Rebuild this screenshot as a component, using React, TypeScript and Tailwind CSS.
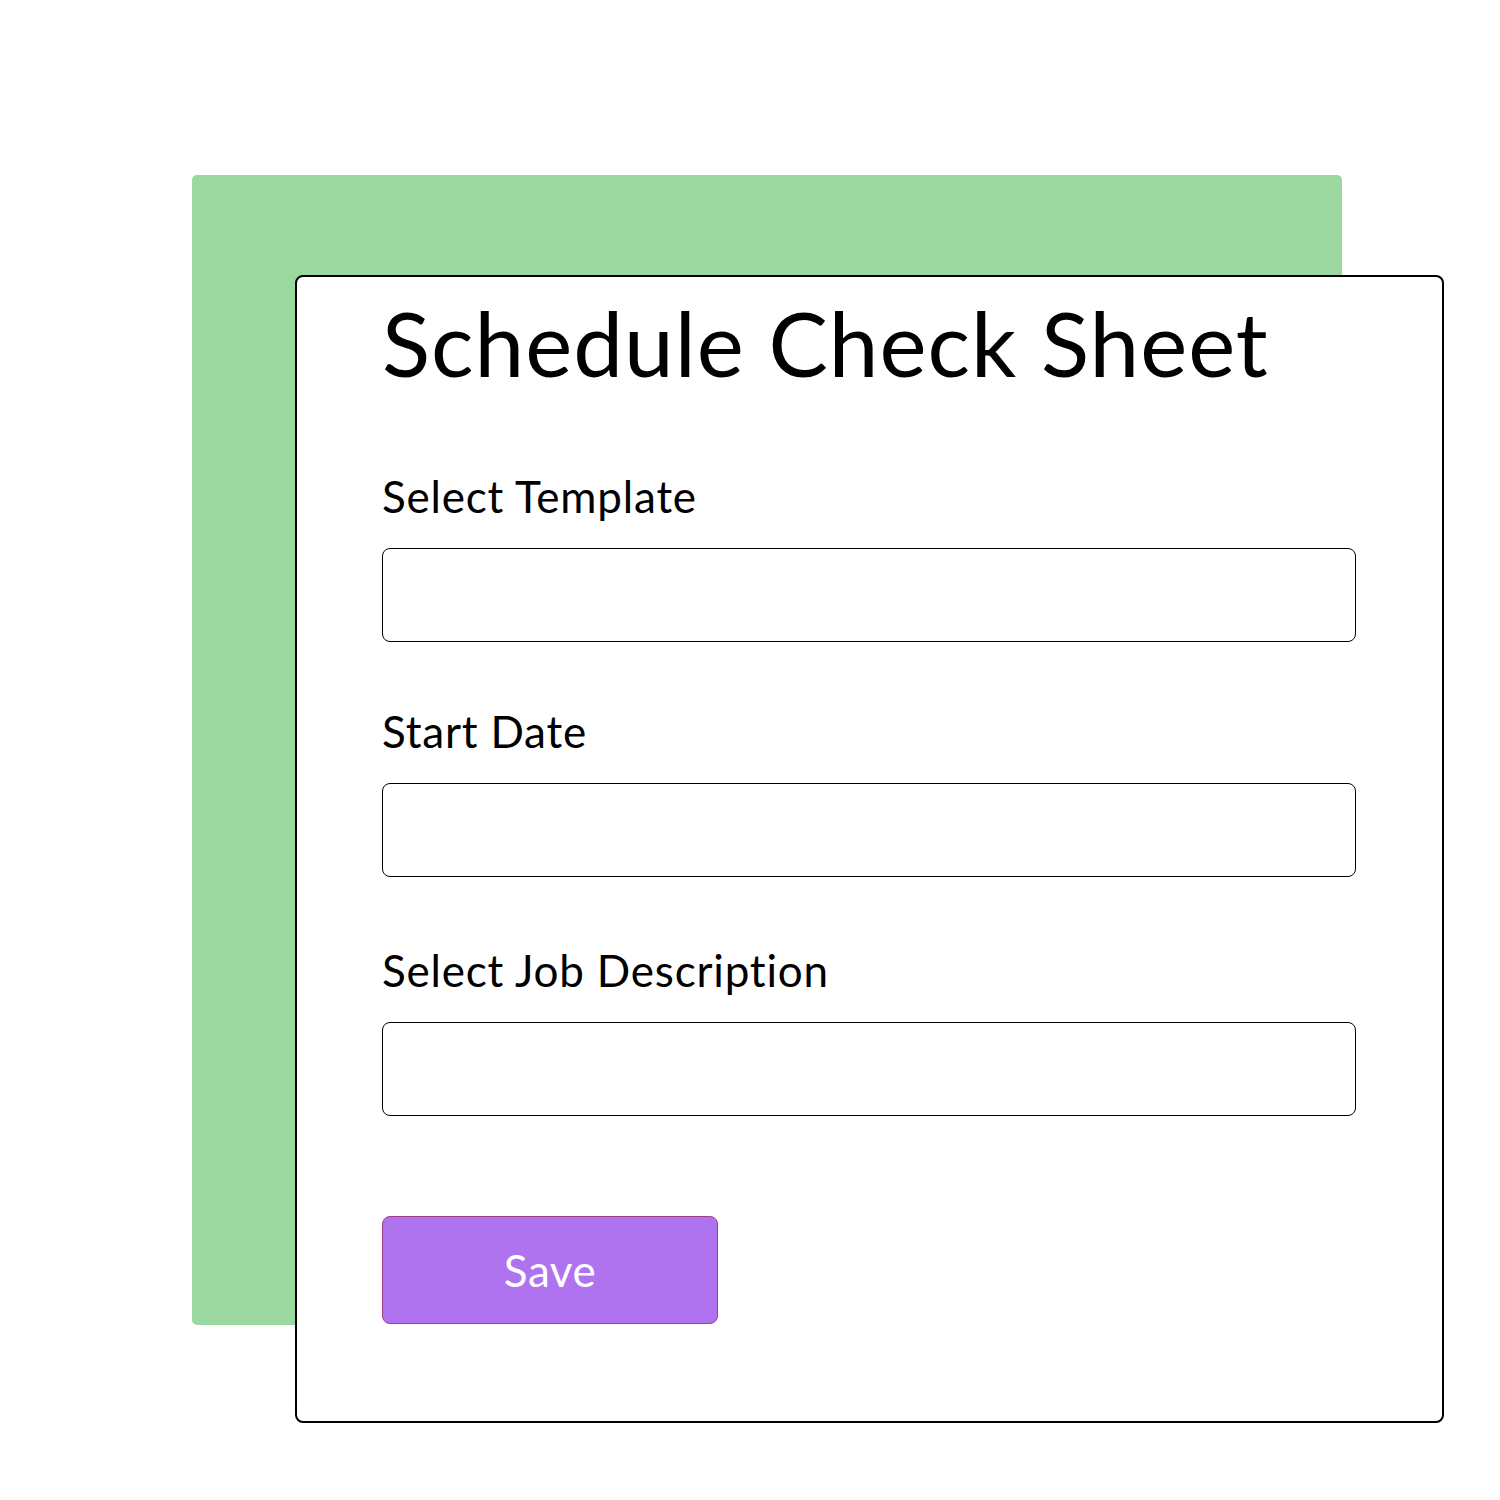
export default function App() {
  const fields = ["Select Template", "Start Date", "Select Job Description"];
  const gaps = ["mt-[87px]", "mt-[67px]", "mt-[71px]"];

  return (
    <div className="min-h-screen bg-white font-['Lato',sans-serif] text-black">
      <div className="relative ml-[192px] pt-[175px] w-[1252px]">
        {/* green backdrop */}
        <div className="h-[1150px] w-[1150px] rounded-[5px] bg-[#9ad8a0]" />

        {/* form card */}
        <div className="absolute left-[103px] top-[275px] h-[1148px] w-[1149px] rounded-[8px] border-2 border-black bg-white pl-[85px] pt-[21px]">
          <h1 className="text-[89px] leading-none font-normal tracking-[1px]">Schedule Check Sheet</h1>

          {fields.map((label, i) => (
            <div key={label} className={gaps[i]}>
              <label className="block text-[44px] leading-none tracking-[0.8px]">{label}</label>
              <input
                type="text"
                className="mt-[30px] block h-[94px] w-[974px] rounded-[8px] border border-black bg-white px-4 outline-none"
              />
            </div>
          ))}

          <button className="mt-[100px] flex h-[108px] w-[336px] items-center justify-center rounded-[8px] border border-[#a13f87] bg-[#b073f0] text-[44px] leading-none tracking-[0.5px] text-white">
            Save
          </button>
        </div>
      </div>
    </div>
  );
}
